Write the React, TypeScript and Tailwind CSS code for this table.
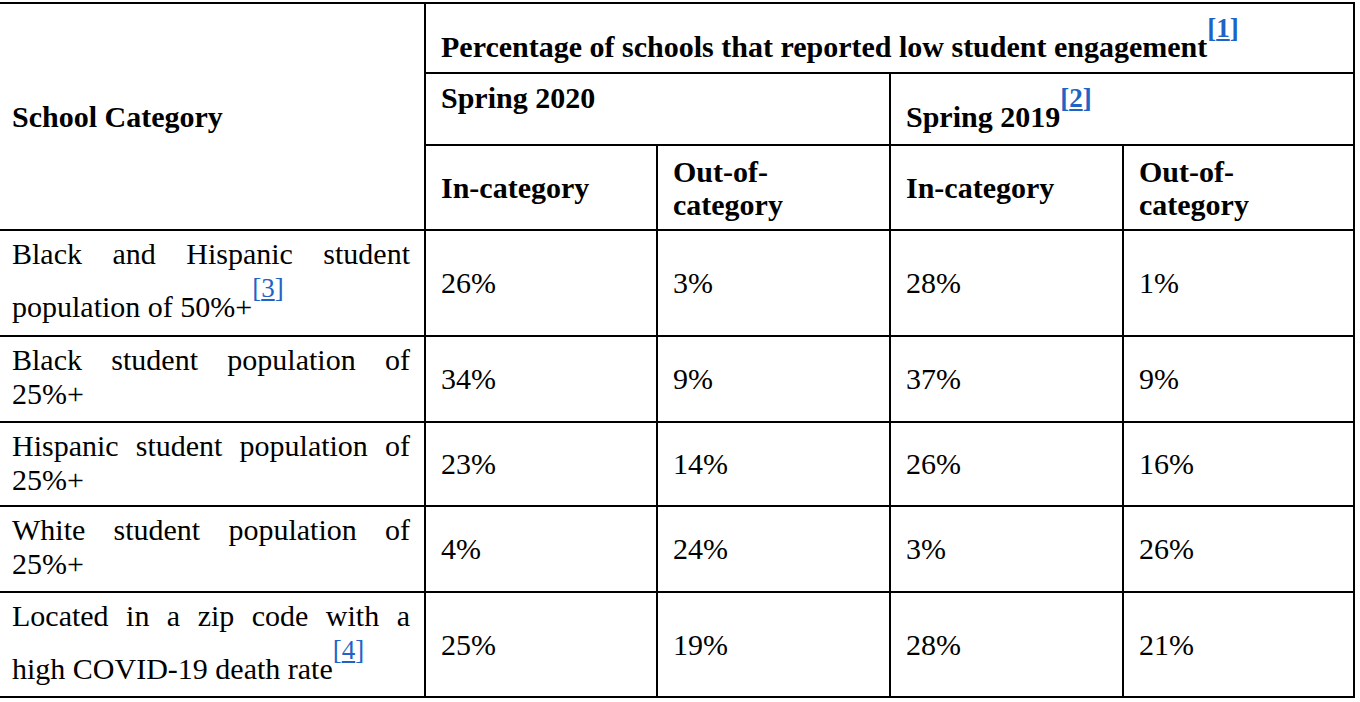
import React from "react";

// Footnote marker, raised so that it pushes its line down like Word does
function Ref({ n, bold = false }: { n: number; bold?: boolean }) {
  return (
    <span
      className={`inline-block text-[27px] leading-[35px] align-[20px] text-[#1f63c6] ${
        bold ? "font-bold" : "font-normal"
      }`}
    >
      [<span className="underline underline-offset-2">{n}</span>]
    </span>
  );
}

const rows = [
  {
    label: (
      <>
        Black and Hispanic student population of 50%+
        <Ref n={3} />
      </>
    ),
    values: ["26%", "3%", "28%", "1%"],
  },
  { label: "Black student population of 25%+", values: ["34%", "9%", "37%", "9%"] },
  { label: "Hispanic student population of 25%+", values: ["23%", "14%", "26%", "16%"] },
  { label: "White student population of 25%+", values: ["4%", "24%", "3%", "26%"] },
  {
    label: (
      <>
        Located in a zip code with a high COVID-19 death rate
        <Ref n={4} />
      </>
    ),
    values: ["25%", "19%", "28%", "21%"],
  },
];

export default function App() {
  return (
    <div className="min-h-[702px] w-[1360px] overflow-hidden bg-white font-['Liberation_Serif','Times_New_Roman',serif] text-[30px] leading-[34px] text-black">
      <div className="-ml-[2px] mt-[2px] grid w-max grid-cols-[424px_230px_231px_231px_229px] grid-rows-[68px_70px_83px_104px_84px_82px_84px_103px] gap-[2px] bg-black p-[2px]">
        {/* header */}
        <div className="row-span-3 flex items-center bg-white pl-3 font-bold">
          School Category
        </div>
        <div className="col-span-4 bg-white pl-[15px] pt-[7px] font-bold">
          Percentage of schools that reported low student engagement
          <Ref n={1} bold />
        </div>
        <div className="col-span-2 bg-white pl-[15px] pt-[7px] font-bold">
          Spring 2020
        </div>
        <div className="col-span-2 bg-white pl-[15px] pt-[7px] font-bold">
          Spring 2019
          <Ref n={2} bold />
        </div>
        <div className="flex items-center bg-white pl-[15px] font-bold">In-category</div>
        <div className="flex items-center bg-white pl-[15px] font-bold leading-[33px]">
          <span>
            Out-of-
            <br />
            category
          </span>
        </div>
        <div className="flex items-center bg-white pl-[15px] font-bold">In-category</div>
        <div className="flex items-center bg-white pl-[15px] font-bold leading-[33px]">
          <span>
            Out-of-
            <br />
            category
          </span>
        </div>

        {/* body */}
        {rows.map((r, i) => (
          <React.Fragment key={i}>
            <div className="bg-white pl-3 pr-[14px] pt-[6px] text-justify">{r.label}</div>
            {r.values.map((v, j) => (
              <div key={j} className="flex items-center bg-white pl-[15px]">
                {v}
              </div>
            ))}
          </React.Fragment>
        ))}
      </div>
    </div>
  );
}
